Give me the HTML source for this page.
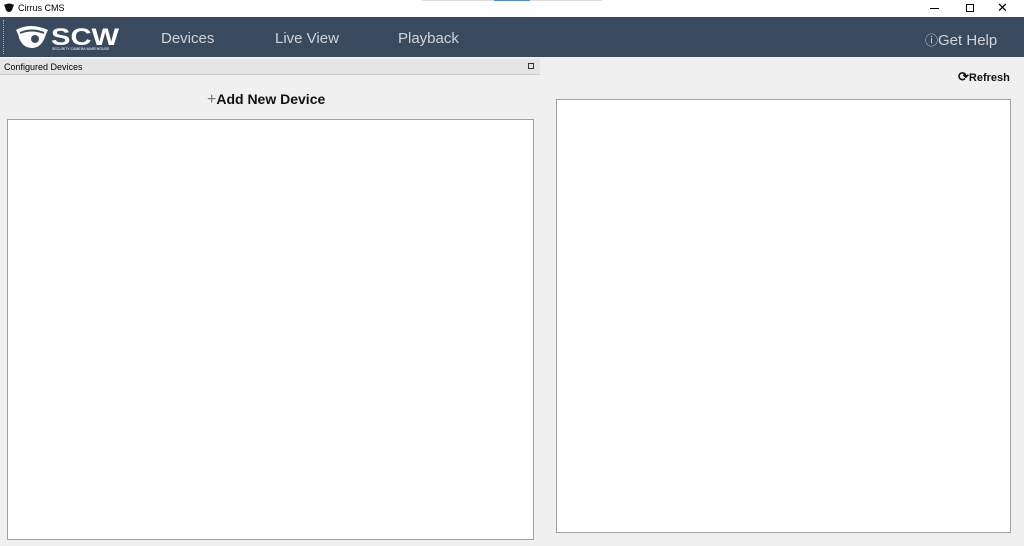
<!DOCTYPE html>
<html><head><style>
*{margin:0;padding:0;box-sizing:border-box}
body{width:1024px;height:546px;background:#f0f0f0;font-family:"Liberation Sans",sans-serif;position:relative;overflow:hidden}
.a{position:absolute}
</style></head><body>
<div class="a" style="left:0;top:0;width:1024px;height:17px;background:#fff"></div>
<svg class="a" style="left:3px;top:3px" width="12" height="10"><path d="M1 2 Q6 -1 11 2 L10 4 Q9 9 6 9 Q3 9 2 4Z" fill="#111"/></svg>
<div class="a" style="left:18px;top:3px;font-size:9px;color:#000">Cirrus CMS</div>
<div class="a" style="left:422px;top:0;width:180px;height:1px;background:#ddd"></div>
<div class="a" style="left:494px;top:0;width:36px;height:1px;background:#4a90d9"></div>
<div class="a" style="left:930px;top:8px;width:9px;height:1px;background:#000"></div>
<div class="a" style="left:966px;top:4px;width:8px;height:8px;border:1px solid #000"></div>
<div class="a" style="left:997px;top:0px;font-size:13px">✕</div>
<div class="a" style="left:0;top:17px;width:1024px;height:40px;background:#3a4a5e"></div>
<div class="a" style="left:3px;top:20px;width:1px;height:34px;border-left:1px dotted #aab"></div>
<svg class="a" style="left:14px;top:24px" width="108" height="28">
<path d="M2 6 Q16 -2 34 6 L32 10 Q28 24 18 24 Q7 24 4 10Z" fill="#fff"/>
<path d="M6 9 Q18 4 30 9" stroke="#3a4a5e" stroke-width="2" fill="none"/>
<circle cx="21" cy="15" r="4" fill="#3a4a5e"/>
<text x="37" y="21" font-family="Liberation Sans" font-weight="bold" font-size="24" fill="#fff" textLength="68" lengthAdjust="spacingAndGlyphs">SCW</text>
<text x="38" y="26" font-size="3.5" fill="#fff">SECURITY CAMERA WAREHOUSE</text>
</svg>
<div class="a" style="left:161px;top:30px;font-size:15px;color:#d0d4da">Devices</div>
<div class="a" style="left:275px;top:30px;font-size:15px;color:#d0d4da">Live View</div>
<div class="a" style="left:398px;top:30px;font-size:15px;color:#d0d4da">Playback</div>
<div class="a" style="left:925px;top:30px;font-size:15px;color:#d0d4da"><span style="font-size:13px">ⓘ</span>Get Help</div>
<div class="a" style="left:0;top:59px;width:540px;height:16px;background:#e4e4e4;border-bottom:1px solid #ccc"></div>
<div class="a" style="left:4px;top:62px;font-size:9px;color:#000">Configured Devices</div>
<div class="a" style="left:528px;top:63px;width:6px;height:6px;border:1px solid #333"></div>
<div class="a" style="left:207px;top:91px;font-size:14px;font-weight:bold;color:#111"><span style="font-weight:normal;color:#777;font-size:16px">+</span>Add New Device</div>
<div class="a" style="left:958px;top:69px;font-size:11px;font-weight:bold;color:#111"><span style="font-size:13px">⟳</span>Refresh</div>
<div class="a" style="left:7px;top:119px;width:527px;height:421px;background:#fff;border:1px solid #a0a0a0"></div>
<div class="a" style="left:556px;top:99px;width:455px;height:434px;background:#fff;border:1px solid #a0a0a0"></div>
</body></html>
